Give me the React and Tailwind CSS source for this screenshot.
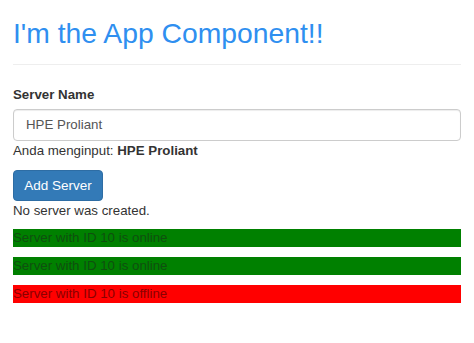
export default function App() {
  const servers = [
    { id: 10, status: "online" },
    { id: 10, status: "online" },
    { id: 10, status: "offline" },
  ];
  return (
    <div
      className="bg-white w-[474px] h-[343px] px-[13px] text-[13.3px] text-[#333] leading-[18px]"
      style={{ fontFamily: '"Liberation Sans", Arial, sans-serif' }}
    >
      <h1 className="pt-[17px] text-[28.3px] leading-[32px] text-[#2f8ff0] font-normal">
        I'm the App Component!!
      </h1>
      <hr className="mt-[15px] border-0 border-t border-[#eee]" />
      <label className="block mt-[21px] font-bold">Server Name</label>
      <div className="mt-[5px] h-[32px] border border-[#ccc] rounded-[4px] px-[12px] flex items-center text-[#555] shadow-[inset_0_1px_1px_rgba(0,0,0,0.075)]">
        HPE Proliant
      </div>
      <p className="mt-[1px]">
        Anda menginput: <b>HPE Proliant</b>
      </p>
      <button className="mt-[10px] h-[31px] w-[90px] bg-[#337ab7] border border-[#2e6da4] rounded-[4px] text-white text-[13.5px]">
        Add Server
      </button>
      <p className="mt-[1px]">No server was created.</p>
      <div className="mt-[9px] flex flex-col gap-[10px]">
        {servers.map((s, i) => (
          <div
            key={i}
            className={
              s.status === "online"
                ? "h-[18px] bg-[#008000] text-[#0f4f0f] leading-[18px]"
                : "h-[18px] bg-[#ff0000] text-[#8a0000] leading-[18px]"
            }
          >
            Server with ID {s.id} is {s.status}
          </div>
        ))}
      </div>
    </div>
  );
}
